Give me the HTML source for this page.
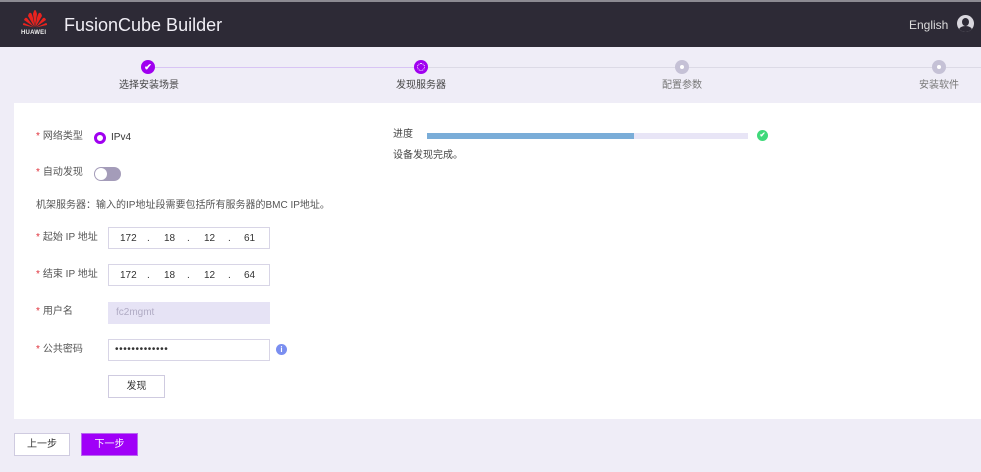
<!DOCTYPE html>
<html><head><meta charset="utf-8"><style>
*{margin:0;padding:0;box-sizing:border-box}
body{width:981px;height:472px;background:#efedf7;font-family:"Liberation Sans","Noto Sans CJK SC",sans-serif;position:relative;overflow:hidden;color:#444;font-size:10px;line-height:12px}
.a{position:absolute}
.hdr{left:0;top:2px;width:981px;height:45px;background:#2d2a36}
.top{left:0;top:0;width:981px;height:2px;background:#8c8a92}
.title{left:64px;top:15px;font-size:18px;line-height:20px;color:#f0eef5}
.step{font-size:10px;color:#444;white-space:nowrap}
.dot{width:14px;height:14px;border-radius:50%}
.panel{left:14px;top:103px;width:967px;height:316px;background:#fff}
.lbl{font-size:10px;color:#555;white-space:nowrap}
.lbl b{color:#e0303a;font-weight:normal;margin-right:3px}
.inp{border:1px solid #d8d5e6;background:#fff;height:22px;width:162px}
.ip{font-size:10px;color:#333}
.btn{border:1px solid #cfcbe0;background:#fff;font-size:10px;text-align:center;color:#333}
</style></head><body>
<div class="a top"></div>
<div class="a hdr"></div>
<svg class="a" style="left:22px;top:10px" width="26" height="18" viewBox="0 0 26 18">
<g fill="#e8231f">
<path d="M13 17 L11 4 Q12 0 13 0 Q14 0 15 4Z"/>
<path d="M12.5 17 L6 6 Q7 2 9 3 Q11 5 12.5 17Z"/>
<path d="M13.5 17 L20 6 Q19 2 17 3 Q15 5 13.5 17Z"/>
<path d="M12 17 L2 10 Q3 7 5 8Z"/>
<path d="M14 17 L24 10 Q23 7 21 8Z"/>
<path d="M12 17.5 L1 15 Q1 13 2 13Z"/>
<path d="M14 17.5 L25 15 Q25 13 24 13Z"/>
</g></svg>
<div class="a" style="left:21px;top:30px;font-size:6px;line-height:7px;color:#eee;font-weight:bold;letter-spacing:.2px">HUAWEI</div>
<div class="a title">FusionCube Builder</div>
<div class="a" style="left:909px;top:18px;font-size:12px;line-height:14px;color:#ddd">English</div>
<div class="a" style="left:957px;top:15px;width:17px;height:17px;border-radius:50%;background:#d9d7de;overflow:hidden">
<div class="a" style="left:5px;top:3px;width:7px;height:8px;border-radius:50%;background:#2d2a36"></div>
<div class="a" style="left:2px;top:11px;width:13px;height:8px;border-radius:50% 50% 0 0;background:#2d2a36"></div></div>

<div class="a" style="left:148px;top:67px;width:273px;height:1px;background:#d8c4f4"></div>
<div class="a" style="left:421px;top:67px;width:560px;height:1px;background:#dcdae6"></div>
<div class="a dot" style="left:141px;top:60px;background:#a000f0;color:#fff;font-size:9px;font-weight:bold;text-align:center;line-height:14px">✔</div>
<div class="a dot" style="left:414px;top:60px;background:#a000f0"><div class="a" style="left:3px;top:3px;width:8px;height:8px;border-radius:50%;border:1px dotted #fff"></div></div>
<div class="a dot" style="left:675px;top:60px;background:#c5c1d6"><div class="a" style="left:5px;top:5px;width:4px;height:4px;border-radius:50%;background:#fff"></div></div>
<div class="a dot" style="left:932px;top:60px;background:#c5c1d6"><div class="a" style="left:5px;top:5px;width:4px;height:4px;border-radius:50%;background:#fff"></div></div>
<div class="a step" style="left:119px;top:80px">选择安装场景</div>
<div class="a step" style="left:396px;top:80px">发现服务器</div>
<div class="a step" style="left:662px;top:80px;color:#777">配置参数</div>
<div class="a step" style="left:919px;top:80px;color:#777">安装软件</div>

<div class="a panel"></div>
<div class="a lbl" style="left:36px;top:131px"><b>*</b>网络类型</div>
<div class="a" style="left:94px;top:132px;width:12px;height:12px;border-radius:50%;border:3px solid #a000f0"></div>
<div class="a" style="left:111px;top:132px;font-size:10px;color:#333">IPv4</div>
<div class="a lbl" style="left:36px;top:167px"><b>*</b>自动发现</div>
<div class="a" style="left:94px;top:167px;width:27px;height:14px;border-radius:7px;background:#a49cb9"><div class="a" style="left:1px;top:1px;width:12px;height:12px;border-radius:50%;background:#fff"></div></div>
<div class="a lbl" style="left:36px;top:200px">机架服务器：输入的IP地址段需要包括所有服务器的BMC IP地址。</div>
<div class="a lbl" style="left:36px;top:232px"><b>*</b>起始 IP 地址</div>
<div class="a inp" style="left:108px;top:227px"></div>
<div class="a ip" style="left:120px;top:233px">172</div><div class="a ip" style="left:147px;top:233px">.</div><div class="a ip" style="left:164px;top:233px">18</div><div class="a ip" style="left:187px;top:233px">.</div><div class="a ip" style="left:204px;top:233px">12</div><div class="a ip" style="left:228px;top:233px">.</div><div class="a ip" style="left:244px;top:233px">61</div>
<div class="a lbl" style="left:36px;top:269px"><b>*</b>结束 IP 地址</div>
<div class="a inp" style="left:108px;top:264px"></div>
<div class="a ip" style="left:120px;top:270px">172</div><div class="a ip" style="left:147px;top:270px">.</div><div class="a ip" style="left:164px;top:270px">18</div><div class="a ip" style="left:187px;top:270px">.</div><div class="a ip" style="left:204px;top:270px">12</div><div class="a ip" style="left:228px;top:270px">.</div><div class="a ip" style="left:244px;top:270px">64</div>
<div class="a lbl" style="left:36px;top:306px"><b>*</b>用户名</div>
<div class="a" style="left:108px;top:302px;width:162px;height:22px;background:#e6e3f5"></div>
<div class="a" style="left:116px;top:307px;font-size:10px;color:#b0abc4">fc2mgmt</div>
<div class="a lbl" style="left:36px;top:344px"><b>*</b>公共密码</div>
<div class="a inp" style="left:108px;top:339px"></div>
<div class="a" style="left:115px;top:344px;font-size:10px;color:#333;letter-spacing:0.6px">•••••••••••••</div>
<div class="a" style="left:276px;top:344px;width:11px;height:11px;border-radius:50%;background:#7a8ef0;color:#fff;font-size:8px;font-weight:bold;text-align:center;line-height:11px">i</div>
<div class="a btn" style="left:108px;top:375px;width:57px;height:23px;line-height:21px">发现</div>

<div class="a lbl" style="left:393px;top:129px;color:#444">进度</div>
<div class="a" style="left:427px;top:133px;width:321px;height:6px;background:#e8e5f6"></div>
<div class="a" style="left:427px;top:133px;width:207px;height:6px;background:#7aadd8"></div>
<div class="a" style="left:757px;top:130px;width:11px;height:11px;border-radius:50%;background:#3fd97a;color:#fff;font-size:7px;font-weight:bold;text-align:center;line-height:11px">✔</div>
<div class="a lbl" style="left:393px;top:150px;color:#444">设备发现完成。</div>

<div class="a btn" style="left:14px;top:433px;width:56px;height:23px;line-height:21px">上一步</div>
<div class="a btn" style="left:81px;top:433px;width:57px;height:23px;line-height:21px;background:#a000f8;border-color:#b868f0;color:#fff">下一步</div>
</body></html>
